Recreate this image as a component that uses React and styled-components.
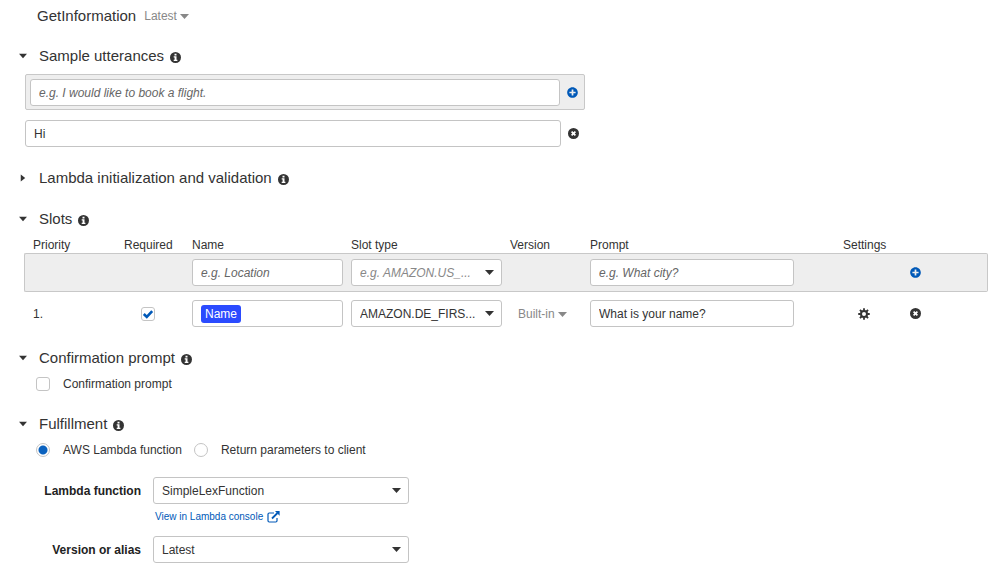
import { useState } from 'react';
import styled, { createGlobalStyle, css } from 'styled-components';
import { FaPlusCircle } from 'react-icons/fa';


const GlobalStyle = createGlobalStyle`
    * {
        box-sizing: border-box;
    }
    body {
        margin: 0;
        background-color: white;
        color: #333;
        font-family: "Liberation Sans", Arial, sans-serif;
        font-size: 12px;
        line-height: 16px;
    }
    input, select, button {
        font: inherit;
        color: inherit;
    }
`;

const Page = styled.main`
    padding: 6px 12px 24px 19px;
`;

const Header = styled.header`
    display: flex;
    align-items: center;
    gap: 8px;
    padding-left: 18px;
    margin-bottom: 20px;
`;

const Title = styled.h1`
    margin: 0;
    font-size: 15px;
    font-weight: 400;
    line-height: 20px;
`;

const SectionBox = styled.section`
    margin-bottom: 21px;
`;

const SectionHead = styled.div`
    display: flex;
    align-items: center;
    gap: 6px;
`;

const SectionTitle = styled.h2`
    margin: 0;
    font-size: 15px;
    font-weight: 400;
    line-height: 20px;
`;

const Toggle = styled.button`
    display: flex;
    align-items: center;
    gap: 12px;
    padding: 0;
    border: none;
    background: none;
    cursor: pointer;
`;

const SectionBody = styled.div`
    padding: 8px 0 0 5px;
`;

const IconButton = styled.button`
    display: inline-flex;
    align-items: center;
    justify-content: center;
    padding: 0;
    border: none;
    background: none;
    font-size: 11px;
    line-height: 12px;
    color: ${(p) => (p.$primary ? '#0059b8' : '#333')};
    cursor: pointer;
`;

const InfoButton = styled(IconButton)`
    padding-top: 2px;
`;

const Caret = styled.svg`
    display: block;
    flex: none;
    width: ${(p) => (p.$small ? 8 : 9)}px;
    height: ${(p) => (p.$small ? 8 : 9)}px;
    fill: ${(p) => p.$color || '#333'};
`;

const boxed = css`
    border: 1px solid #c4c4c4;
    border-radius: 3px;
    background-color: white;
`;

const Input = styled.input`
    ${boxed}
    display: block;
    width: 100%;
    min-width: 0;
    height: 27px;
    padding: 0 8px;
    &::placeholder {
        color: #666;
        font-style: italic;
        opacity: 1;
    }
`;

const UtteranceList = styled.div`
    display: grid;
    gap: 10px;
    max-width: 561px;
    padding-left: 1px;
`;

const UtteranceRow = styled.form`
    display: flex;
    ${(p) => p.$shaded && css`
        padding: 4px 0 3px 4px;
        border: 1px solid #c8c8c8;
        border-radius: 2px;
        background-color: #eee;
    `}
    ${IconButton} {
        flex: none;
        width: 24px;
    }
`;

const SelectWrap = styled.div`
    position: relative;
    > svg {
        position: absolute;
        right: 8px;
        top: 9px;
        pointer-events: none;
    }
`;

const Select = styled.select`
    ${boxed}
    display: block;
    width: 100%;
    height: 27px;
    padding: 0 24px 0 8px;
    appearance: none;
    ${(p) => p.$empty && css`
        color: #888;
        font-style: italic;
    `}
`;

const PlainWrap = styled.div`
    position: relative;
    display: inline-block;
    vertical-align: top;
    > svg {
        position: absolute;
        right: 0;
        top: 4px;
        pointer-events: none;
    }
`;

const PlainSelect = styled.select`
    display: block;
    height: 16px;
    padding: 0 12px 0 0;
    border: none;
    background: none;
    color: #888;
    appearance: none;
    field-sizing: content;
`;

const SlotTable = styled.table`
    width: 100%;
    table-layout: fixed;
    border-collapse: separate;
    border-spacing: 0;
    th {
        height: 16px;
        padding: 0;
        font-weight: 400;
        text-align: left;
    }
    td {
        padding: 8px 8px 0 0;
    }
    th:first-child, td:first-child {
        padding-left: 9px;
    }
    th:nth-child(2), td:nth-child(2) {
        padding-right: 20px;
        text-align: center;
    }
`;

const Col = styled.col`
    width: ${(p) => p.$width || 'auto'};
`;

const NewSlotRow = styled.tr`
    && td {
        padding-top: 5px;
        padding-bottom: 5px;
        border: 1px solid #c8c8c8;
        border-width: 1px 0;
        background-color: #eee;
    }
    && td:first-child {
        border-left-width: 1px;
        border-radius: 2px 0 0 2px;
    }
    && td:last-child {
        border-right-width: 1px;
        border-radius: 0 2px 2px 0;
    }
`;

const PromptBox = styled.div`
    max-width: 204px;
`;

const VersionBox = styled.div`
    padding-left: 8px;
`;

const Actions = styled.div`
    display: grid;
    grid-template-columns: 42px 60px;
    justify-items: center;
`;

const TagBox = styled.div`
    ${boxed}
    display: flex;
    align-items: center;
    height: 27px;
    padding: 0 8px;
`;

const Tag = styled.span`
    padding: 1px 4px;
    border-radius: 3px;
    background-color: #2b4bff;
    color: white;
`;

const TagInput = styled.input`
    flex: 1;
    min-width: 0;
    border: none;
    outline: none;
    background: none;
`;

const CheckWrap = styled.span`
    position: relative;
    display: inline-block;
    width: 14px;
    height: 14px;
    vertical-align: middle;
    svg {
        position: absolute;
        inset: 0;
        pointer-events: none;
    }
`;

const CheckInput = styled.input`
    display: block;
    width: 14px;
    height: 14px;
    margin: 0;
    border: 1px solid #c4c4c4;
    border-radius: 3px;
    background-color: white;
    appearance: none;
`;

const RadioInput = styled.input`
    width: 14px;
    height: 14px;
    margin: 0;
    border: 1px solid #c4c4c4;
    border-radius: 50%;
    background-color: white;
    appearance: none;
    &:checked {
        background: radial-gradient(circle, #0b62bf 4px, white 5px);
    }
`;

const Choices = styled.div`
    display: flex;
    flex-wrap: wrap;
    gap: 12px;
    padding: 0 0 1px 12px;
`;

const Choice = styled.label`
    display: flex;
    align-items: center;
    gap: 13px;
`;

const Fields = styled.div`
    display: grid;
    grid-template-columns: 117px minmax(0, 256px);
    column-gap: 12px;
    padding-top: 18px;
`;

const FieldLabel = styled.label`
    line-height: 28px;
    font-weight: 700;
    text-align: right;
    color: #222;
`;

const ConsoleLink = styled.a`
    display: inline-flex;
    align-items: center;
    gap: 4px;
    margin: 5px 0 11px 2px;
    font-size: 10px;
    color: #0059b8;
    text-decoration: none;
`;


const Arrow = ({ side, ...rest }) => (
    <Caret viewBox="0 0 9 9" aria-hidden="true" {...rest}>
        <path d={side ? 'M2 0.5v8L7 4.5z' : 'M0 2h9L4.5 7z'} />
    </Caret>
);

const InfoIcon = () => (
    <svg width="11" height="11" viewBox="0 0 22 22" aria-hidden="true">
        <circle cx="11" cy="11" r="11" fill="currentColor" />
        <path d="M9 3.5h4v3.4H9zM7.4 8.6H13v7h1.8v2.6H7.4v-2.6h1.8v-4.4H7.4z" fill="white" />
    </svg>
);

const RemoveIcon = () => (
    <svg width="11" height="11" viewBox="0 0 22 22" aria-hidden="true">
        <circle cx="11" cy="11" r="11" fill="currentColor" />
        <path d="M7.2 7.2l7.6 7.6M14.8 7.2l-7.6 7.6" stroke="white" strokeWidth="3.4" />
    </svg>
);

const GearIcon = () => (
    <svg width="12" height="12" viewBox="0 0 24 24" fill="none" stroke="currentColor" aria-hidden="true">
        <circle cx="12" cy="12" r="6" strokeWidth="4" />
        <path
            d="M12 5V0.5M12 19v4.5M5 12H0.5M19 12h4.5M7 7L3.9 3.9M17 7l3.1-3.1M7 17l-3.1 3.1M17 17l3.1 3.1"
            strokeWidth="3.6"
        />
    </svg>
);

const ExternalIcon = () => (
    <svg width="13" height="12" viewBox="0 0 13 12" fill="none" stroke="currentColor" aria-hidden="true">
        <path d="M7 2H2.2Q1 2 1 3.2v6.6Q1 11 2.2 11h6.6q1.2 0 1.2-1.2V7" strokeWidth="1.2" />
        <path d="M5 7.5L10.5 2" strokeWidth="1.8" />
        <path d="M8 0h4.6v4.8z" fill="currentColor" stroke="none" />
    </svg>
);

const Section = ({ title, closed, children }) => {
    const [open, setOpen] = useState(!closed);

    return (
        <SectionBox>
            <SectionHead>
                <SectionTitle>
                    <Toggle type="button" aria-expanded={open} onClick={() => setOpen(!open)}>
                        <Arrow $small side={!open} />
                        {title}
                    </Toggle>
                </SectionTitle>
                <InfoButton type="button" aria-label={`About ${title}`}><InfoIcon /></InfoButton>
            </SectionHead>
            {open && children && <SectionBody>{children}</SectionBody>}
        </SectionBox>
    );
};

const Dropdown = ({ id, label, options, empty }) => (
    <SelectWrap>
        <Select id={id} aria-label={label} $empty={empty}>
            {options.map((o) => <option key={o}>{o}</option>)}
        </Select>
        <Arrow />
    </SelectWrap>
);

const PlainDropdown = ({ label, options }) => (
    <PlainWrap>
        <PlainSelect aria-label={label}>
            {options.map((o) => <option key={o}>{o}</option>)}
        </PlainSelect>
        <Arrow $color="#888" />
    </PlainWrap>
);

const Checkbox = ({ checked, onChange, label }) => (
    <CheckWrap>
        <CheckInput type="checkbox" checked={checked} onChange={onChange} aria-label={label} />
        {checked && (
            <svg width="14" height="14" viewBox="0 0 14 14" aria-hidden="true">
                <path d="M2.8 7l3 3L11.2 4.2" fill="none" stroke="#0059b8" strokeWidth="2.6" />
            </svg>
        )}
    </CheckWrap>
);


const App = () => {

    const [required, setRequired] = useState(true);
    const [confirm, setConfirm] = useState(false);
    const [fulfillment, setFulfillment] = useState("lambda");

    return (
        <>
            <GlobalStyle />
            <Page>
                <Header>
                    <Title>GetInformation</Title>
                    <PlainDropdown label="Intent version" options={['Latest']} />
                </Header>

                <Section title="Sample utterances">
                    <UtteranceList>
                        <UtteranceRow $shaded onSubmit={(e) => e.preventDefault()}>
                            <Input aria-label="New utterance" placeholder="e.g. I would like to book a flight." />
                            <IconButton $primary type="submit" aria-label="Add utterance"><FaPlusCircle /></IconButton>
                        </UtteranceRow>
                        <UtteranceRow onSubmit={(e) => e.preventDefault()}>
                            <Input aria-label="Utterance" defaultValue="Hi" />
                            <IconButton type="button" aria-label="Remove utterance"><RemoveIcon /></IconButton>
                        </UtteranceRow>
                    </UtteranceList>
                </Section>

                <Section title="Lambda initialization and validation" closed />

                <Section title="Slots">
                    <SlotTable>
                        <colgroup>
                            <Col $width="100px" />
                            <Col $width="68px" />
                            <Col $width="159px" />
                            <Col $width="159px" />
                            <Col $width="80px" />
                            <Col $width="253px" />
                            <Col />
                        </colgroup>
                        <thead>
                            <tr>
                                <th>Priority</th>
                                <th>Required</th>
                                <th>Name</th>
                                <th>Slot type</th>
                                <th>Version</th>
                                <th>Prompt</th>
                                <th>Settings</th>
                            </tr>
                        </thead>
                        <tbody>
                            <NewSlotRow>
                                <td />
                                <td />
                                <td><Input aria-label="New slot name" placeholder="e.g. Location" /></td>
                                <td><Dropdown label="New slot type" options={['e.g. AMAZON.US_...']} empty /></td>
                                <td />
                                <td>
                                    <PromptBox>
                                        <Input aria-label="New slot prompt" placeholder="e.g. What city?" />
                                    </PromptBox>
                                </td>
                                <td>
                                    <Actions>
                                        <span />
                                        <IconButton $primary type="button" aria-label="Add slot"><FaPlusCircle /></IconButton>
                                    </Actions>
                                </td>
                            </NewSlotRow>
                            <tr>
                                <td>1.</td>
                                <td>
                                    <Checkbox
                                        label="Required"
                                        checked={required}
                                        onChange={(e) => setRequired(e.target.checked)}
                                    />
                                </td>
                                <td>
                                    <TagBox>
                                        <Tag>Name</Tag>
                                        <TagInput aria-label="Slot name" />
                                    </TagBox>
                                </td>
                                <td><Dropdown label="Slot type" options={['AMAZON.DE_FIRS...']} /></td>
                                <td>
                                    <VersionBox>
                                        <PlainDropdown label="Slot version" options={['Built-in']} />
                                    </VersionBox>
                                </td>
                                <td>
                                    <PromptBox>
                                        <Input aria-label="Slot prompt" defaultValue="What is your name?" />
                                    </PromptBox>
                                </td>
                                <td>
                                    <Actions>
                                        <IconButton type="button" aria-label="Slot settings"><GearIcon /></IconButton>
                                        <IconButton type="button" aria-label="Remove slot"><RemoveIcon /></IconButton>
                                    </Actions>
                                </td>
                            </tr>
                        </tbody>
                    </SlotTable>
                </Section>

                <Section title="Confirmation prompt">
                    <Choices>
                        <Choice>
                            <Checkbox checked={confirm} onChange={(e) => setConfirm(e.target.checked)} />
                            Confirmation prompt
                        </Choice>
                    </Choices>
                </Section>

                <Section title="Fulfillment">
                    <Choices>
                        <Choice>
                            <RadioInput
                                type="radio"
                                name="fulfillment"
                                checked={fulfillment === "lambda"}
                                onChange={() => setFulfillment("lambda")}
                            />
                            AWS Lambda function
                        </Choice>
                        <Choice>
                            <RadioInput
                                type="radio"
                                name="fulfillment"
                                checked={fulfillment === "client"}
                                onChange={() => setFulfillment("client")}
                            />
                            Return parameters to client
                        </Choice>
                    </Choices>
                    <Fields>
                        <FieldLabel htmlFor="lambda">Lambda function</FieldLabel>
                        <div>
                            <Dropdown id="lambda" options={['SimpleLexFunction']} />
                            <ConsoleLink href="#console">View in Lambda console <ExternalIcon /></ConsoleLink>
                        </div>
                        <FieldLabel htmlFor="alias">Version or alias</FieldLabel>
                        <Dropdown id="alias" options={['Latest']} />
                    </Fields>
                </Section>
            </Page>
        </>
    );
};


export default App;
